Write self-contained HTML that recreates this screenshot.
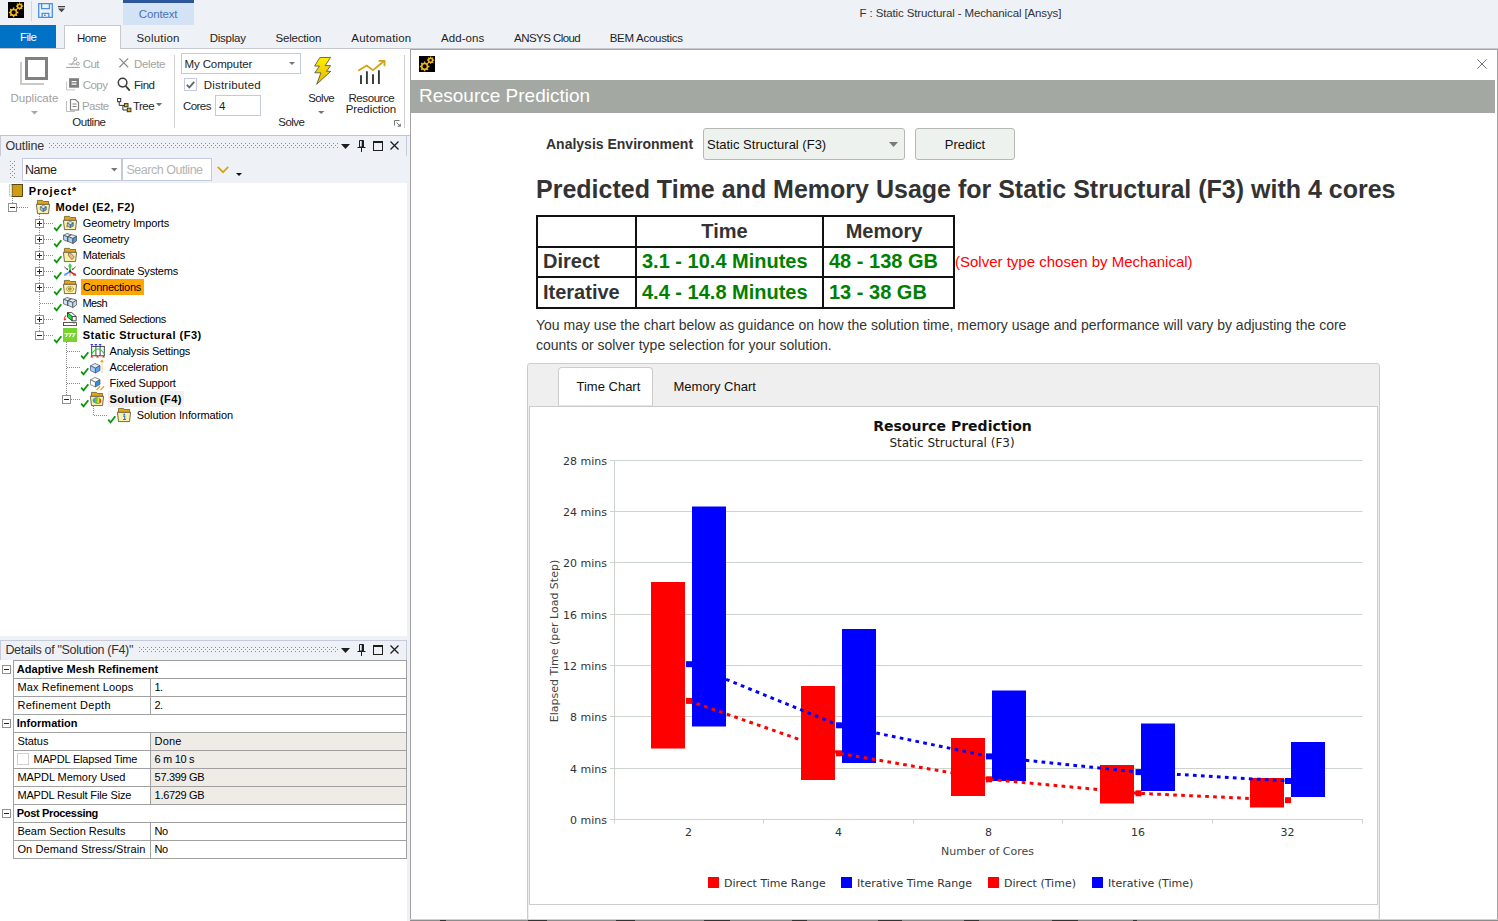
<!DOCTYPE html>
<html lang="en"><head><meta charset="utf-8"><title>F : Static Structural - Mechanical [Ansys]</title>
<style>
*{box-sizing:border-box;margin:0;padding:0}
html,body{width:1498px;height:921px;overflow:hidden;background:#eef2f7}
body{position:relative;font-family:"Liberation Sans",sans-serif;font-size:12px;color:#1e1e1e}
.a{position:absolute;white-space:nowrap}
.t{position:absolute;white-space:nowrap;line-height:16px;height:16px}
.ui{font-family:"Liberation Sans",sans-serif;font-size:12px}
.dv{font-family:"DejaVu Sans","Liberation Sans",sans-serif}
.c{text-align:center}
svg{position:absolute;overflow:visible}
</style></head>
<body>
<svg style="left:8px;top:2px" width="16" height="16" viewBox="0 0 16 16"><rect width="16" height="16" fill="#000"/>
<g fill="none" stroke="#f2b718" stroke-width="1.6"><circle cx="5.6" cy="10.4" r="2.9"/><circle cx="11.6" cy="4.2" r="2"/></g>
<g stroke="#f2b718" stroke-width="1.5" stroke-linecap="butt"><path d="M5.6 5.6v1.5M5.6 13.7v1.5M.8 10.4h1.5M8.9 10.4h1.5M2.2 7l1.1 1.1M7.9 12.7l1.1 1.1M2.2 13.8l1.1-1.1M7.9 8.1l1.1-1.1"/>
<path d="M11.6 .6v1.2M11.6 6.6v1.2M8 4.2h1.2M14 4.2h1.2M9 1.6l.9.9M13.3 5.9l.9.9M9 6.8l.9-.9M13.3 2.5l.9-.9" stroke-width="1.2"/></g></svg>
<div class="a" style="left:31px;top:1px;width:1px;height:20px;background:#d2d6de"></div>
<svg style="left:38px;top:3px" width="15" height="15" viewBox="0 0 15 15" fill="none" stroke="#4a8fe6" stroke-width="1.3"><path d="M.7 .7h13.6v13.6H.7z"/><path d="M3.6 .7v5h7.8v-5"/><path d="M4.2 14.3v-4h6.6v4" /><path d="M6 12.2h1.6" stroke-width="1.6"/></svg>
<svg style="left:58px;top:6px" width="8" height="7" viewBox="0 0 8 7"><rect x="0" y="0" width="7" height="1.3" fill="#444"/><path d="M0 2.6h7L3.5 6.2z" fill="#444"/></svg>
<div class="a" style="left:123px;top:0px;width:71px;height:25px;background:#d3e3f5"></div>
<div class="a" style="left:123px;top:0px;width:71px;height:3px;background:#2b579a"></div>
<div class="t" style="left:138.8px;top:6px;color:#4a72b5;font-size:11.5px;letter-spacing:-0.16px">Context</div>
<div class="t" style="left:859.6px;top:5px;font-size:11.5px;color:#333;letter-spacing:-0.13px">F : Static Structural - Mechanical [Ansys]</div>
<div class="a" style="left:0px;top:25px;width:56px;height:23px;background:#0072c6"></div>
<div class="t" style="left:19.96px;top:29px;color:#fff;font-size:11.5px;letter-spacing:-0.55px">File</div>
<div class="a" style="left:0px;top:48px;width:1498px;height:1px;background:#c6c9cf"></div>
<div class="a" style="left:64px;top:25px;width:57px;height:24px;background:#fff;border:1px solid #c6c9cf;border-bottom:none"></div>
<div class="t" style="left:77px;top:30px;font-size:11.5px;color:#1e1e1e;letter-spacing:-0.43px">Home</div>
<div class="t" style="left:136.5px;top:30px;font-size:11.5px;color:#1e1e1e;letter-spacing:0.19px">Solution</div>
<div class="t" style="left:209.7px;top:30px;font-size:11.5px;color:#1e1e1e;letter-spacing:-0.25px">Display</div>
<div class="t" style="left:275.6px;top:30px;font-size:11.5px;color:#1e1e1e;letter-spacing:-0.2px">Selection</div>
<div class="t" style="left:351.3px;top:30px;font-size:11.5px;color:#1e1e1e;letter-spacing:0.2px">Automation</div>
<div class="t" style="left:441px;top:30px;font-size:11.5px;color:#1e1e1e;letter-spacing:0.08px">Add-ons</div>
<div class="t" style="left:514.03px;top:30px;font-size:11.5px;color:#1e1e1e;letter-spacing:-0.55px">ANSYS Cloud</div>
<div class="t" style="left:609.7px;top:30px;font-size:11.5px;color:#1e1e1e;letter-spacing:-0.28px">BEM Acoustics</div>
<div class="a" style="left:0px;top:49px;width:1498px;height:86px;background:#fff"></div>
<div class="a" style="left:0px;top:135px;width:1498px;height:1px;background:#c2c5c8"></div>
<div class="a" style="left:20px;top:62px;width:24px;height:23px;border:2px solid #c9cbc9;border-top:none;border-right:none"></div>
<div class="a" style="left:25px;top:57px;width:23px;height:23px;border:3px solid #808080;background:#fff"></div>
<div class="t" style="left:10.6px;top:90px;color:#a0a0a0;font-size:11.5px;letter-spacing:-0.03px">Duplicate</div>
<svg style="left:30.5px;top:111px" width="7" height="3.5" viewBox="0 0 7 3.5"><path d="M0 0h7L3.5 3.5z" fill="#a8a8a8"/></svg>
<svg style="left:66px;top:56px" width="15" height="13" viewBox="0 0 15 13" fill="none" stroke="#a3a3a3" stroke-width="1"><path d="M.1 11.4h13.8"/><path d="M2.6 8h8.1M5.2 9.2L8.9 3.7"/><circle cx="9.3" cy="3" r="1.5"/><circle cx="11.8" cy="7.7" r="1.5"/></svg>
<div class="t" style="left:82.7px;top:56px;color:#a3a3a3;font-size:11.5px;letter-spacing:-0.55px">Cut</div>
<svg style="left:66px;top:77px" width="15" height="14" viewBox="0 0 15 14"><path d="M.6 4.5v8.4H9" fill="none" stroke="#c4c4c4"/><rect x="3.1" y="1.2" width="9.9" height="9.5" fill="#7f7f7f"/><path d="M5.6 4.6h4.9M5.6 7.1h4.9" stroke="#fff" stroke-width="1.2"/></svg>
<div class="t" style="left:82.7px;top:77px;color:#a3a3a3;font-size:11.5px;letter-spacing:-0.55px">Copy</div>
<svg style="left:66px;top:98px" width="15" height="15" viewBox="0 0 15 15" fill="none"><path d="M.5 3v10.5H9" stroke="#bdbdbd"/><path d="M4.5 1.5h5l3 3v7.5h-8z" stroke="#7f7f7f" stroke-width="1.2"/><path d="M6.5 6h4M6.5 8.5h4" stroke="#7f7f7f"/></svg>
<div class="t" style="left:81.99px;top:98px;color:#a3a3a3;font-size:11.5px;letter-spacing:-0.55px">Paste</div>
<svg style="left:119.2px;top:58.1px" width="9.6" height="9.6" viewBox="0 0 9.6 9.6"><path d="M.4 .4l8.8 8.8M9.2 .4L.4 9.2" stroke="#8c8c8c" stroke-width="1.25"/></svg>
<div class="t" style="left:134px;top:56px;color:#a3a3a3;font-size:11.5px;letter-spacing:-0.37px">Delete</div>
<svg style="left:117px;top:77px" width="14" height="15" viewBox="0 0 14 15" fill="none" stroke="#3b3b3b" stroke-width="1.5"><circle cx="5.6" cy="5.6" r="4.3"/><path d="M8.7 9l4 4.7" stroke-width="1.8"/></svg>
<div class="t" style="left:134px;top:77px;color:#1e1e1e;font-size:11.5px;letter-spacing:-0.46px">Find</div>
<svg style="left:117px;top:98px" width="15" height="14" viewBox="0 0 15 14" fill="none" stroke="#333" stroke-width="1"><rect x=".6" y=".5" width="3.1" height="3.2" fill="#fff"/><path d="M2.2 3.7V7.4H7.4M5.9 7.4V12H10.3"/><rect x="7.4" y="5.6" width="3.6" height="3.2" fill="#e8b414"/><rect x="10.3" y="10.2" width="3.6" height="3.5" fill="#e8b414"/></svg>
<div class="t" style="left:133.01px;top:98px;color:#1e1e1e;font-size:11.5px;letter-spacing:-0.55px">Tree</div>
<svg style="left:155.8px;top:103px" width="6.2" height="3.2" viewBox="0 0 6.2 3.2"><path d="M0 0h6.2L3.1 3.2z" fill="#707070"/></svg>
<div class="t" style="left:72.3px;top:114px;font-size:11.5px;color:#1e1e1e;letter-spacing:-0.46px">Outline</div>
<div class="a" style="left:174px;top:55px;width:1px;height:73px;background:#d0d0d0"></div>
<div class="a" style="left:181px;top:53px;width:120px;height:21px;border:1px solid #c3c9de;background:#fff"></div>
<div class="t" style="left:184.5px;top:56px;font-size:11.5px;letter-spacing:-0.12px">My Computer</div>
<svg style="left:289px;top:62px" width="6" height="3" viewBox="0 0 6 3"><path d="M0 0h6L3 3z" fill="#777"/></svg>
<div class="a" style="left:184px;top:78px;width:13px;height:13px;border:1px solid #c3c9de;background:#fff"></div>
<svg style="left:186px;top:81px" width="9" height="8" viewBox="0 0 9 8"><path d="M.8 3.8L3.4 6.4 8.2 .9" fill="none" stroke="#686868" stroke-width="1.8"/></svg>
<div class="t" style="left:203.8px;top:77px;font-size:11.5px;letter-spacing:0.19px">Distributed</div>
<div class="t" style="left:182.96px;top:98px;font-size:11.5px;letter-spacing:-0.55px">Cores</div>
<div class="a" style="left:215px;top:95px;width:46px;height:21px;border:1px solid #c3c9de;background:#fff"></div>
<div class="t" style="left:219px;top:98px;font-size:11.5px">4</div>
<div class="t" style="left:278.31px;top:114px;font-size:11.5px;letter-spacing:-0.55px">Solve</div>
<svg style="left:0;top:0" width="420" height="135" viewBox="0 0 420 135"><defs><linearGradient id="lg" x1="0" y1="0" x2="0" y2="1"><stop offset="0" stop-color="#fff200"/><stop offset="1" stop-color="#e6b000"/></linearGradient></defs><path d="M319.8 57.6L330.6 57.4 325.2 65.6 330.6 65.6 326.5 71.3 330.8 71.3 316.7 84.3 320.9 72.8 314.8 72.8 319.5 66.1 314.6 66.1z" fill="url(#lg)" stroke="#4a4a3a" stroke-width=".8" stroke-linejoin="miter"/></svg>
<div class="t" style="left:308.16px;top:90px;font-size:11.5px;letter-spacing:-0.55px">Solve</div>
<svg style="left:317.8px;top:111.3px" width="6.4" height="3" viewBox="0 0 6.4 3"><path d="M0 0h6.4L3.2 3z" fill="#777"/></svg>
<svg style="left:0;top:0" width="420" height="135" viewBox="0 0 420 135" fill="none"><path d="M361 75.2V83.9M366.9 71.3V83.9M373 74.3V83.9M378.9 70.2V83.9" stroke="#333a36" stroke-width="1.9"/><path d="M358.2 70.8L366.7 65.6 373 70.2 383.8 61.3" stroke="#d4a017" stroke-width="1.8"/><path d="M378.6 60.9h5.9v5.4" stroke="#d4a017" stroke-width="1.8"/></svg>
<div class="t" style="left:348.5px;top:90px;font-size:11.5px;letter-spacing:-0.43px">Resource</div>
<div class="t" style="left:345.7px;top:101px;font-size:11.5px;letter-spacing:-0.08px">Prediction</div>
<svg style="left:394px;top:120px" width="7" height="7" viewBox="0 0 7 7" fill="none" stroke="#777"><path d="M.5 5.5V.5H5.5"/><path d="M2.5 2.5l3.5 3.5" /><path d="M6.8 3.2v3.6H3.2z" fill="#777" stroke="none"/></svg>
<div class="a" style="left:404px;top:55px;width:1px;height:73px;background:#d0d0d0"></div>
<div class="a" style="left:0px;top:136px;width:407px;height:20px;background:#eef2f7;border-left:1px solid #c5cbdb;border-right:1px solid #c5cbdb"></div>
<div class="t" style="left:5.5px;top:138px;font-size:12.5px;color:#333;letter-spacing:-0.15px">Outline</div>
<svg style="left:49px;top:143px" width="289" height="5" viewBox="0 0 289 5" shape-rendering="crispEdges"><defs><pattern id="gp49_143" width="4" height="4" patternUnits="userSpaceOnUse"><rect width="1" height="1" fill="#8a8a8a"/><rect x="2" y="2" width="1" height="1" fill="#8a8a8a"/></pattern></defs><rect width="289" height="5" fill="url(#gp49_143)"/></svg>
<svg style="left:340.5px;top:144px" width="9" height="5" viewBox="0 0 9 5"><path d="M0 0h9L4.5 5z" fill="#1e1e1e"/></svg>
<svg style="left:357px;top:140px" width="9" height="12" viewBox="0 0 9 12" fill="none" stroke="#1e1e1e"><path d="M2.5 .5h4v6.5h-4z"/><path d="M5.5 .5v6.5" stroke-width="1.6"/><path d="M.5 7.5h8M4.5 7.5V12"/></svg>
<div class="a" style="left:373px;top:141px;width:10px;height:10px;border:1px solid #1e1e1e;border-top-width:2px"></div>
<svg style="left:390px;top:140.7px" width="9" height="9" viewBox="0 0 9 9"><path d="M.5 .5l8 8M8.5 .5l-8 8" stroke="#1e1e1e" stroke-width="1.3"/></svg>
<div class="a" style="left:0px;top:156px;width:407px;height:27px;background:#eef2f7"></div>
<svg style="left:10px;top:161px" width="5" height="17" viewBox="0 0 5 17" shape-rendering="crispEdges"><defs><pattern id="gv10_161" width="4" height="4" patternUnits="userSpaceOnUse"><rect width="1" height="1" fill="#8a8a8a"/><rect x="2" y="2" width="1" height="1" fill="#8a8a8a"/></pattern></defs><rect width="5" height="17" fill="url(#gv10_161)"/></svg>
<div class="a" style="left:22px;top:158px;width:100px;height:23px;border:1px solid #c3c9de;background:#fff"></div>
<div class="t" style="left:25px;top:162px;font-size:12.5px;letter-spacing:-0.45px">Name</div>
<svg style="left:110.5px;top:168px" width="6.5" height="3.5" viewBox="0 0 6.5 3.5"><path d="M0 0h6.5L3.25 3.5z" fill="#777"/></svg>
<div class="a" style="left:122px;top:158px;width:90px;height:23px;border:1px solid #c3c9de;background:#fff"></div>
<div class="t" style="left:126.5px;top:162px;font-size:12.5px;color:#b4b4b4;letter-spacing:-0.47px">Search Outline</div>
<svg style="left:217px;top:165.5px" width="12" height="8" viewBox="0 0 12 8"><path d="M.7 .8l5.3 5.4L11.3 .8" fill="none" stroke="#d9a514" stroke-width="1.7"/></svg>
<svg style="left:236px;top:173px" width="6" height="3" viewBox="0 0 6 3"><path d="M0 0h6L3 3z" fill="#111"/></svg>
<div class="a" style="left:0px;top:183px;width:407px;height:453px;background:#fff"></div>
<div class="a" style="left:407px;top:136px;width:3px;height:785px;background:#eef2f7"></div>
<div class="a" style="left:12px;top:198px;width:1px;height:5px;background-image:linear-gradient(180deg,#8a8a8a 1px,transparent 1px);background-size:1px 2px"></div>
<div class="a" style="left:39px;top:214px;width:1px;height:117px;background-image:linear-gradient(180deg,#8a8a8a 1px,transparent 1px);background-size:1px 2px"></div>
<div class="a" style="left:66px;top:342px;width:1px;height:53px;background-image:linear-gradient(180deg,#8a8a8a 1px,transparent 1px);background-size:1px 2px"></div>
<div class="a" style="left:93px;top:406px;width:1px;height:9px;background-image:linear-gradient(180deg,#8a8a8a 1px,transparent 1px);background-size:1px 2px"></div>
<svg style="left:9px;top:184px" width="14" height="13" viewBox="0 0 14 13"><rect x="3" y=".5" width="10.5" height="12" fill="#cf9d12" stroke="#4a3a08" stroke-width=".9"/><rect x=".5" y=".8" width="2.5" height="11.4" fill="#f2f2f2" stroke="#888" stroke-width=".6" stroke-dasharray="1 .6"/></svg>
<div class="t" style="left:28.8px;top:183px;font-size:11px;color:#000;font-weight:700;;letter-spacing:0.83px">Project*</div>
<div class="a" style="left:17px;top:207px;width:11px;height:1px;background-image:linear-gradient(90deg,#8a8a8a 1px,transparent 1px);background-size:2px 1px"></div>
<div class="a" style="left:8px;top:203px;width:9px;height:9px;border:1px solid #919191;background:#fff"></div><div class="a" style="left:10px;top:207px;width:5px;height:1px;background:#222"></div>
<svg style="left:36px;top:200px" width="14" height="14" viewBox="0 0 14 14"><path d="M1.4 .4h5.2l.9 1.1h5.1v3.5H1.4z" fill="#e0a616" stroke="#5a4c1c" stroke-width=".7"/><path d="M.4 4.3h13.2l-1.1 9.3H1.5z" fill="#fbf1a2" stroke="#4a463a" stroke-width=".8" stroke-linejoin="round"/><path d="M4.3 6.949999999999999L7.3 5.27L10.3 6.949999999999999L7.3 8.765z" fill="#dcecfb" stroke="#3d4c66" stroke-width=".6" stroke-linejoin="round"/><path d="M4.3 6.949999999999999L7.3 8.765V11.6L4.3 9.95z" fill="#a9cdf3" stroke="#3d4c66" stroke-width=".6" stroke-linejoin="round"/><path d="M10.3 6.949999999999999L7.3 8.765V11.6L10.3 9.95z" fill="#5f9fe6" stroke="#3d4c66" stroke-width=".6" stroke-linejoin="round"/></svg>
<div class="t" style="left:55.4px;top:199px;font-size:11px;color:#000;font-weight:700;;letter-spacing:0.35px">Model (E2, F2)</div>
<div class="a" style="left:44px;top:223px;width:9px;height:1px;background-image:linear-gradient(90deg,#8a8a8a 1px,transparent 1px);background-size:2px 1px"></div>
<div class="a" style="left:35px;top:219px;width:9px;height:9px;border:1px solid #919191;background:#fff"></div><div class="a" style="left:37px;top:223px;width:5px;height:1px;background:#222"></div><div class="a" style="left:39px;top:221px;width:1px;height:5px;background:#222"></div>
<svg style="left:53px;top:221px" width="11" height="10" viewBox="0 0 11 10"><path d="M1.2 6.6L3.6 9.3 8.3 3.3" fill="none" stroke="#0a960a" stroke-width="1.8"/></svg>
<svg style="left:63.3px;top:216px" width="14" height="14" viewBox="0 0 14 14"><path d="M1.4 .4h5.2l.9 1.1h5.1v3.5H1.4z" fill="#e0a616" stroke="#5a4c1c" stroke-width=".7"/><path d="M.4 4.3h13.2l-1.1 9.3H1.5z" fill="#fbf1a2" stroke="#4a463a" stroke-width=".8" stroke-linejoin="round"/><path d="M4.3 6.949999999999999L7.3 5.27L10.3 6.949999999999999L7.3 8.765z" fill="#dcecfb" stroke="#3d4c66" stroke-width=".6" stroke-linejoin="round"/><path d="M4.3 6.949999999999999L7.3 8.765V11.6L4.3 9.95z" fill="#a9cdf3" stroke="#3d4c66" stroke-width=".6" stroke-linejoin="round"/><path d="M10.3 6.949999999999999L7.3 8.765V11.6L10.3 9.95z" fill="#5f9fe6" stroke="#3d4c66" stroke-width=".6" stroke-linejoin="round"/><path d="M3 10.2h2.4M4.2 9v2.4" stroke="#c98a00" stroke-width=".9"/></svg>
<div class="t" style="left:82.7px;top:215px;font-size:11px;color:#000;;letter-spacing:-0.1px">Geometry Imports</div>
<div class="a" style="left:44px;top:239px;width:9px;height:1px;background-image:linear-gradient(90deg,#8a8a8a 1px,transparent 1px);background-size:2px 1px"></div>
<div class="a" style="left:35px;top:235px;width:9px;height:9px;border:1px solid #919191;background:#fff"></div><div class="a" style="left:37px;top:239px;width:5px;height:1px;background:#222"></div><div class="a" style="left:39px;top:237px;width:1px;height:5px;background:#222"></div>
<svg style="left:53px;top:237px" width="11" height="10" viewBox="0 0 11 10"><path d="M1.2 6.6L3.6 9.3 8.3 3.3" fill="none" stroke="#0a960a" stroke-width="1.8"/></svg>
<svg style="left:63.3px;top:233px" width="14" height="11" viewBox="0 0 14 11" stroke="#444" stroke-width=".7" stroke-linejoin="round"><path d="M.5 2.3L4 .5l4.2 1.3-3.5 2z" fill="#dcecfb"/><path d="M.5 2.3l4.2 1.5v4.7L.5 6.8z" fill="#b3d3f5"/><path d="M8.2 1.8L4.7 3.8v4.7l3.5-2.2z" fill="#9cc6f2"/><path d="M5 3.6L8.8 1.7l4.7 1.5-3.7 2.3z" fill="#dcecfb"/><path d="M5 3.6l4.8 1.9v5L5 8.4z" fill="#b3d3f5"/><path d="M13.5 3.2L9.8 5.5v5l3.7-2.5z" fill="#4f96e6"/></svg>
<div class="t" style="left:82.7px;top:231px;font-size:11px;color:#000;;letter-spacing:-0.26px">Geometry</div>
<div class="a" style="left:44px;top:255px;width:9px;height:1px;background-image:linear-gradient(90deg,#8a8a8a 1px,transparent 1px);background-size:2px 1px"></div>
<div class="a" style="left:35px;top:251px;width:9px;height:9px;border:1px solid #919191;background:#fff"></div><div class="a" style="left:37px;top:255px;width:5px;height:1px;background:#222"></div><div class="a" style="left:39px;top:253px;width:1px;height:5px;background:#222"></div>
<svg style="left:53px;top:253px" width="11" height="10" viewBox="0 0 11 10"><path d="M1.2 6.6L3.6 9.3 8.3 3.3" fill="none" stroke="#0a960a" stroke-width="1.8"/></svg>
<svg style="left:63.3px;top:248px" width="14" height="14" viewBox="0 0 14 14"><path d="M1.4 .4h5.2l.9 1.1h5.1v3.5H1.4z" fill="#e0a616" stroke="#5a4c1c" stroke-width=".7"/><path d="M.4 4.3h13.2l-1.1 9.3H1.5z" fill="#fbf1a2" stroke="#4a463a" stroke-width=".8" stroke-linejoin="round"/><path d="M5.3 5.3l1.5-.5 1 1 .4-.2 3 3.3-2.2 2.7L5.7 8z" fill="#f3b58e" stroke="#5a4c3c" stroke-width=".6" stroke-linejoin="round"/></svg>
<div class="t" style="left:82.7px;top:247px;font-size:11px;color:#000;;letter-spacing:-0.25px">Materials</div>
<div class="a" style="left:44px;top:271px;width:9px;height:1px;background-image:linear-gradient(90deg,#8a8a8a 1px,transparent 1px);background-size:2px 1px"></div>
<div class="a" style="left:35px;top:267px;width:9px;height:9px;border:1px solid #919191;background:#fff"></div><div class="a" style="left:37px;top:271px;width:5px;height:1px;background:#222"></div><div class="a" style="left:39px;top:269px;width:1px;height:5px;background:#222"></div>
<svg style="left:53px;top:269px" width="11" height="10" viewBox="0 0 11 10"><path d="M1.2 6.6L3.6 9.3 8.3 3.3" fill="none" stroke="#0a960a" stroke-width="1.8"/></svg>
<svg style="left:63.3px;top:263px" width="14" height="15" viewBox="0 0 14 15" fill="none"><path d="M7 8.3V3" stroke="#19c219" stroke-width="1.5"/><path d="M4.9 3.6L7 .3l2.1 3.3z" fill="#19e019"/><path d="M7 8.3L2.8 11.3" stroke="#4a8cf0" stroke-width="1.5"/><path d="M.6 12.9l1.3-3.2 2.6 2.5z" fill="#6aa8ff"/><path d="M7 8.3l4.2 3" stroke="#e01818" stroke-width="1.5"/><path d="M13.4 12.9l-1.3-3.2-2.6 2.5z" fill="#ff2020"/><path d="M1.3 3.8l3.4 3M12.7 3.8l-3.4 3" stroke="#555" stroke-width="1"/><path d="M3.2 6.8h1.7V5.1zM10.8 6.8H9.1V5.1z" fill="#444"/><path d="M7 9.5v4" stroke="#777" stroke-width="1.3" stroke-dasharray="1.2 .7"/><rect x="6.1" y="7.4" width="1.8" height="1.8" fill="#222"/></svg>
<div class="t" style="left:82.7px;top:263px;font-size:11px;color:#000;;letter-spacing:-0.21px">Coordinate Systems</div>
<div class="a" style="left:44px;top:287px;width:9px;height:1px;background-image:linear-gradient(90deg,#8a8a8a 1px,transparent 1px);background-size:2px 1px"></div>
<div class="a" style="left:35px;top:283px;width:9px;height:9px;border:1px solid #919191;background:#fff"></div><div class="a" style="left:37px;top:287px;width:5px;height:1px;background:#222"></div><div class="a" style="left:39px;top:285px;width:1px;height:5px;background:#222"></div>
<svg style="left:53px;top:285px" width="11" height="10" viewBox="0 0 11 10"><path d="M1.2 6.6L3.6 9.3 8.3 3.3" fill="none" stroke="#0a960a" stroke-width="1.8"/></svg>
<svg style="left:63.3px;top:280px" width="14" height="14" viewBox="0 0 14 14"><path d="M1.4 .4h5.2l.9 1.1h5.1v3.5H1.4z" fill="#e0a616" stroke="#5a4c1c" stroke-width=".7"/><path d="M.4 4.3h13.2l-1.1 9.3H1.5z" fill="#fbf1a2" stroke="#4a463a" stroke-width=".8" stroke-linejoin="round"/><ellipse cx="7" cy="9" rx="3.6" ry="2.6" fill="#efe08a" stroke="#6b5f3a" stroke-width=".7" stroke-dasharray="1.2 .8"/><ellipse cx="6.8" cy="8.9" rx="1.5" ry="1.1" fill="#e0a616" stroke="#7a5a10" stroke-width=".5"/></svg>
<div class="a" style="left:81px;top:279px;width:63px;height:16px;background:#ffa500"></div>
<div class="t" style="left:82.7px;top:279px;font-size:11px;color:#000;;letter-spacing:-0.26px">Connections</div>
<div class="a" style="left:40px;top:303px;width:13px;height:1px;background-image:linear-gradient(90deg,#8a8a8a 1px,transparent 1px);background-size:2px 1px"></div>
<svg style="left:53px;top:301px" width="11" height="10" viewBox="0 0 11 10"><path d="M1.2 6.6L3.6 9.3 8.3 3.3" fill="none" stroke="#0a960a" stroke-width="1.8"/></svg>
<svg style="left:63.3px;top:297px" width="14" height="11" viewBox="0 0 14 11" stroke="#444" stroke-width=".7" stroke-linejoin="round"><path d="M.5 2.3L4 .5l4.2 1.3-3.5 2z" fill="#dcecfb"/><path d="M.5 2.3l4.2 1.5v4.7L.5 6.8z" fill="#cfe2f7"/><path d="M8.2 1.8L4.7 3.8v4.7l3.5-2.2z" fill="#d4e5f8"/><path d="M5 3.6L8.8 1.7l4.7 1.5-3.7 2.3z" fill="#dcecfb"/><path d="M5 3.6l4.8 1.9v5L5 8.4z" fill="#cfe2f7"/><path d="M13.5 3.2L9.8 5.5v5l3.7-2.5z" fill="#c3daf3"/></svg>
<div class="t" style="left:82.42px;top:295px;font-size:11px;color:#000;;letter-spacing:-0.55px">Mesh</div>
<div class="a" style="left:44px;top:319px;width:9px;height:1px;background-image:linear-gradient(90deg,#8a8a8a 1px,transparent 1px);background-size:2px 1px"></div>
<div class="a" style="left:35px;top:315px;width:9px;height:9px;border:1px solid #919191;background:#fff"></div><div class="a" style="left:37px;top:319px;width:5px;height:1px;background:#222"></div><div class="a" style="left:39px;top:317px;width:1px;height:5px;background:#222"></div>
<svg style="left:63.3px;top:312px" width="14" height="14" viewBox="0 0 14 14"><path d="M4.5 .6h4.3l4.4 3.9v4.3h-4z" fill="#fff" stroke="#222" stroke-width=".8" stroke-linejoin="round"/><path d="M4.5 .6v4.5l4.7 3.7V4.5z" fill="#22e03a" stroke="#222" stroke-width=".8" stroke-linejoin="round"/><path d="M9.2 4.5h4" stroke="#222" stroke-width=".8"/><rect x=".5" y="10.6" width="13" height="3" fill="#fff" stroke="#333" stroke-width=".8"/><rect x="10.3" y="11.1" width="1.6" height=".9" fill="#e8a818"/><path d="M3 3.3q-1.8 1.6-1.3 4.2" fill="none" stroke="#ff2020" stroke-width="1.1"/><path d="M.3 6.7h3.2l-1.6 2z" fill="#ff2020"/></svg>
<div class="t" style="left:82.7px;top:311px;font-size:11px;color:#000;;letter-spacing:-0.38px">Named Selections</div>
<div class="a" style="left:44px;top:335px;width:9px;height:1px;background-image:linear-gradient(90deg,#8a8a8a 1px,transparent 1px);background-size:2px 1px"></div>
<div class="a" style="left:35px;top:331px;width:9px;height:9px;border:1px solid #919191;background:#fff"></div><div class="a" style="left:37px;top:335px;width:5px;height:1px;background:#222"></div>
<svg style="left:53px;top:333px" width="11" height="10" viewBox="0 0 11 10"><path d="M1.2 6.6L3.6 9.3 8.3 3.3" fill="none" stroke="#0a960a" stroke-width="1.8"/></svg>
<svg style="left:63px;top:328px" width="14" height="14" viewBox="0 0 14 14"><rect width="14" height="14" fill="#77d42e"/><path d="M1.5 5.6h11" stroke="#fff" stroke-width="1.1"/><path d="M4.3 5.8q-.3 2-1.7 3.2M7.8 5.8q-.3 2-1.7 3.2M11.3 5.8q-.3 2-1.7 3.2" stroke="#fff" stroke-width="1.1" fill="none"/></svg>
<div class="t" style="left:82.7px;top:327px;font-size:11px;color:#000;font-weight:700;;letter-spacing:0.49px">Static Structural (F3)</div>
<div class="a" style="left:67px;top:351px;width:13px;height:1px;background-image:linear-gradient(90deg,#8a8a8a 1px,transparent 1px);background-size:2px 1px"></div>
<svg style="left:80px;top:349px" width="11" height="10" viewBox="0 0 11 10"><path d="M1.2 6.6L3.6 9.3 8.3 3.3" fill="none" stroke="#0a960a" stroke-width="1.8"/></svg>
<svg style="left:90.3px;top:344px" width="16" height="15" viewBox="0 0 16 15" fill="none"><rect x="1.7" y="2.4" width="12.6" height="9.4" stroke="#333" stroke-width=".9"/><path d="M5.9 2.4v9.4M10.1 2.4v9.4" stroke="#333" stroke-width=".9"/><path d="M.6 .5h2.4M4.7 .5h2.4M8.9 .5h2.4M1.8 .5v2M5.9 .5v2M10.1 .5v2" stroke="#1c2cf0" stroke-width=".9"/><path d="M1.8 9.8q6.2-9.5 12.4 0" stroke="#16e016" stroke-width="1.1"/><path d="M.3 13.5l1.5-2 1.5 2zM6 13.5l1.5-2 1.5 2zM12 13.5l1.5-2 1.5 2z" fill="#ff1a1a"/></svg>
<div class="t" style="left:109.6px;top:343px;font-size:11px;color:#000;;letter-spacing:-0.19px">Analysis Settings</div>
<div class="a" style="left:67px;top:367px;width:13px;height:1px;background-image:linear-gradient(90deg,#8a8a8a 1px,transparent 1px);background-size:2px 1px"></div>
<svg style="left:80px;top:365px" width="11" height="10" viewBox="0 0 11 10"><path d="M1.2 6.6L3.6 9.3 8.3 3.3" fill="none" stroke="#0a960a" stroke-width="1.8"/></svg>
<svg style="left:90.3px;top:362.5px" width="10.5" height="10.5" viewBox="0 0 11 11"><path d="M.5 3L5.2 .5l5.3 2.3-4.8 2.6z" fill="#dcecfb" stroke="#3d4c66" stroke-width=".7" stroke-linejoin="round"/><path d="M.5 3l5.2 2.4v5.1L.5 8z" fill="#a9cdf3" stroke="#3d4c66" stroke-width=".7" stroke-linejoin="round"/><path d="M10.5 2.8L5.7 5.4v5.1l4.8-2.7z" fill="#5f9fe6" stroke="#3d4c66" stroke-width=".7" stroke-linejoin="round"/></svg><svg style="left:99.8px;top:359px" width="4" height="14" viewBox="0 0 4 14"><path d="M2 3.5V14" stroke="#e8a820" stroke-width="1" stroke-dasharray="1 1"/><path d="M0 3.3L2 .2l2 3.1z" fill="#e8a820"/></svg>
<div class="t" style="left:109.6px;top:359px;font-size:11px;color:#000;;letter-spacing:-0.18px">Acceleration</div>
<div class="a" style="left:67px;top:383px;width:13px;height:1px;background-image:linear-gradient(90deg,#8a8a8a 1px,transparent 1px);background-size:2px 1px"></div>
<svg style="left:80px;top:381px" width="11" height="10" viewBox="0 0 11 10"><path d="M1.2 6.6L3.6 9.3 8.3 3.3" fill="none" stroke="#0a960a" stroke-width="1.8"/></svg>
<svg style="left:90.3px;top:376.5px" width="10.5" height="10.5" viewBox="0 0 11 11"><path d="M.5 3L5.2 .5l5.3 2.3-4.8 2.6z" fill="#fff" stroke="#555" stroke-width=".7" stroke-linejoin="round"/><path d="M.5 3l5.2 2.4v5.1L.5 8z" fill="#fff" stroke="#555" stroke-width=".7" stroke-linejoin="round"/><path d="M10.5 2.8L5.7 5.4v5.1l4.8-2.7z" fill="#2f8fe8" stroke="#555" stroke-width=".7" stroke-linejoin="round"/></svg><svg style="left:95.8px;top:386px" width="9" height="4" viewBox="0 0 9 4"><path d="M.5 4L4 .3M4.5 4L8 .3" stroke="#e8a820" stroke-width="1.3"/></svg>
<div class="t" style="left:109.6px;top:375px;font-size:11px;color:#000;;letter-spacing:-0.18px">Fixed Support</div>
<div class="a" style="left:71px;top:399px;width:9px;height:1px;background-image:linear-gradient(90deg,#8a8a8a 1px,transparent 1px);background-size:2px 1px"></div>
<div class="a" style="left:62px;top:395px;width:9px;height:9px;border:1px solid #919191;background:#fff"></div><div class="a" style="left:64px;top:399px;width:5px;height:1px;background:#222"></div>
<svg style="left:80px;top:397px" width="11" height="10" viewBox="0 0 11 10"><path d="M1.2 6.6L3.6 9.3 8.3 3.3" fill="none" stroke="#0a960a" stroke-width="1.8"/></svg>
<svg style="left:90.3px;top:392px" width="14" height="14" viewBox="0 0 14 14"><path d="M1.4 .4h5.2l.9 1.1h5.1v3.5H1.4z" fill="#e0a616" stroke="#5a4c1c" stroke-width=".7"/><path d="M.4 4.3h13.2l-1.1 9.3H1.5z" fill="#fbf1a2" stroke="#4a463a" stroke-width=".8" stroke-linejoin="round"/><path d="M3 7.5q1-2 4-2t4 2.5v2q-1 2-4 1.5t-4-2z" fill="#3aa0e0" stroke="#555" stroke-width=".4"/><path d="M5 5.8q1.5-.5 2.5-.2v5.6q-1.5 0-2.5-.8z" fill="#5cc83c"/><path d="M7.5 5.6q1.5.1 2.3.8v4.4q-.8.6-2.3.4z" fill="#f0e030"/><path d="M9.3 6.2q1.3.6 1.7 1.8v2q-.5 1-1.7 1.2z" fill="#e8402a"/></svg>
<div class="a" style="left:108px;top:391px;width:76px;height:16px;background:#f0f0f0"></div>
<div class="t" style="left:109.6px;top:391px;font-size:11px;color:#000;font-weight:700;;letter-spacing:0.38px">Solution (F4)</div>
<div class="a" style="left:94px;top:415px;width:13px;height:1px;background-image:linear-gradient(90deg,#8a8a8a 1px,transparent 1px);background-size:2px 1px"></div>
<svg style="left:107px;top:413px" width="11" height="10" viewBox="0 0 11 10"><path d="M1.2 6.6L3.6 9.3 8.3 3.3" fill="none" stroke="#0a960a" stroke-width="1.8"/></svg>
<svg style="left:117.3px;top:408px" width="14" height="14" viewBox="0 0 14 14"><path d="M1.4 .4h5.2l.9 1.1h5.1v3.5H1.4z" fill="#e0a616" stroke="#5a4c1c" stroke-width=".7"/><path d="M.4 4.3h13.2l-1.1 9.3H1.5z" fill="#fbf1a2" stroke="#4a463a" stroke-width=".8" stroke-linejoin="round"/><circle cx="7.2" cy="6.3" r=".9" fill="#2f6fe0"/><path d="M6.2 8.1h1.5v3.3M6 11.5h3" fill="none" stroke="#2f6fe0" stroke-width="1.1"/></svg>
<div class="t" style="left:136.8px;top:407px;font-size:11px;color:#000;;letter-spacing:-0.08px">Solution Information</div>
<div class="a" style="left:0px;top:636px;width:407px;height:4px;background:#eef2f7"></div>
<div class="a" style="left:0px;top:640px;width:407px;height:20px;background:#eef2f7;border:1px solid #c5cbdb;border-bottom:none"></div>
<div class="t" style="left:5.4px;top:642px;font-size:12.5px;color:#333;letter-spacing:-0.32px">Details of "Solution (F4)"</div>
<svg style="left:139px;top:647px" width="199" height="5" viewBox="0 0 199 5" shape-rendering="crispEdges"><defs><pattern id="gp139_647" width="4" height="4" patternUnits="userSpaceOnUse"><rect width="1" height="1" fill="#8a8a8a"/><rect x="2" y="2" width="1" height="1" fill="#8a8a8a"/></pattern></defs><rect width="199" height="5" fill="url(#gp139_647)"/></svg>
<svg style="left:340.5px;top:648px" width="9" height="5" viewBox="0 0 9 5"><path d="M0 0h9L4.5 5z" fill="#1e1e1e"/></svg>
<svg style="left:357px;top:644px" width="9" height="12" viewBox="0 0 9 12" fill="none" stroke="#1e1e1e"><path d="M2.5 .5h4v6.5h-4z"/><path d="M5.5 .5v6.5" stroke-width="1.6"/><path d="M.5 7.5h8M4.5 7.5V12"/></svg>
<div class="a" style="left:373px;top:645px;width:10px;height:10px;border:1px solid #1e1e1e;border-top-width:2px"></div>
<svg style="left:390px;top:644.7px" width="9" height="9" viewBox="0 0 9 9"><path d="M.5 .5l8 8M8.5 .5l-8 8" stroke="#1e1e1e" stroke-width="1.3"/></svg>
<div class="a" style="left:0px;top:660px;width:407px;height:261px;background:#fff"></div>
<div class="a" style="left:13px;top:660px;width:394px;height:199px;border:1px solid #a0a0a0"></div>
<div class="a" style="left:2px;top:665px;width:9px;height:9px;border:1px solid #919191;background:#fff"></div>
<div class="a" style="left:4px;top:669px;width:5px;height:1px;background:#222"></div>
<div class="t" style="left:16.8px;top:660.5px;font-size:11px;font-weight:700;color:#000;letter-spacing:0.03px">Adaptive Mesh Refinement</div>
<div class="a" style="left:13px;top:678px;width:394px;height:1px;background:#a0a0a0"></div>
<div class="a" style="left:150px;top:678px;width:1px;height:18px;background:#a0a0a0"></div>
<div class="t" style="left:17.4px;top:678.5px;font-size:11px;color:#000;;letter-spacing:0.15px">Max Refinement Loops</div>
<div class="t" style="left:154.38px;top:678.5px;font-size:11px;color:#000;;letter-spacing:-0.55px">1.</div>
<div class="a" style="left:13px;top:696px;width:394px;height:1px;background:#a0a0a0"></div>
<div class="a" style="left:150px;top:696px;width:1px;height:18px;background:#a0a0a0"></div>
<div class="t" style="left:17.4px;top:696.5px;font-size:11px;color:#000;;letter-spacing:0.3px">Refinement Depth</div>
<div class="t" style="left:154.38px;top:696.5px;font-size:11px;color:#000;;letter-spacing:-0.55px">2.</div>
<div class="a" style="left:13px;top:714px;width:394px;height:1px;background:#a0a0a0"></div>
<div class="a" style="left:2px;top:719px;width:9px;height:9px;border:1px solid #919191;background:#fff"></div>
<div class="a" style="left:4px;top:723px;width:5px;height:1px;background:#222"></div>
<div class="t" style="left:16.8px;top:714.5px;font-size:11px;font-weight:700;color:#000;letter-spacing:0.02px">Information</div>
<div class="a" style="left:13px;top:732px;width:394px;height:1px;background:#a0a0a0"></div>
<div class="a" style="left:151px;top:733px;width:255px;height:17px;background:#efece8"></div>
<div class="a" style="left:150px;top:732px;width:1px;height:18px;background:#a0a0a0"></div>
<div class="t" style="left:17.4px;top:732.5px;font-size:11px;color:#000;;letter-spacing:-0.04px">Status</div>
<div class="t" style="left:154.6px;top:732.5px;font-size:11px;color:#000;;letter-spacing:0.2px">Done</div>
<div class="a" style="left:13px;top:750px;width:394px;height:1px;background:#a0a0a0"></div>
<div class="a" style="left:151px;top:751px;width:255px;height:17px;background:#efece8"></div>
<div class="a" style="left:150px;top:750px;width:1px;height:18px;background:#a0a0a0"></div>
<div class="a" style="left:17px;top:753px;width:12px;height:12px;border:1px solid #d0d0d0;background:#fff"></div>
<div class="t" style="left:33.5px;top:750.5px;font-size:11px;color:#000;;letter-spacing:-0.19px">MAPDL Elapsed Time</div>
<div class="t" style="left:154.6px;top:750.5px;font-size:11px;color:#000;;letter-spacing:-0.34px">6 m 10 s</div>
<div class="a" style="left:13px;top:768px;width:394px;height:1px;background:#a0a0a0"></div>
<div class="a" style="left:151px;top:769px;width:255px;height:17px;background:#efece8"></div>
<div class="a" style="left:150px;top:768px;width:1px;height:18px;background:#a0a0a0"></div>
<div class="t" style="left:17.4px;top:768.5px;font-size:11px;color:#000;;letter-spacing:-0.06px">MAPDL Memory Used</div>
<div class="t" style="left:154.6px;top:768.5px;font-size:11px;color:#000;;letter-spacing:-0.32px">57.399 GB</div>
<div class="a" style="left:13px;top:786px;width:394px;height:1px;background:#a0a0a0"></div>
<div class="a" style="left:151px;top:787px;width:255px;height:17px;background:#efece8"></div>
<div class="a" style="left:150px;top:786px;width:1px;height:18px;background:#a0a0a0"></div>
<div class="t" style="left:17.4px;top:786.5px;font-size:11px;color:#000;;letter-spacing:-0.14px">MAPDL Result File Size</div>
<div class="t" style="left:154.6px;top:786.5px;font-size:11px;color:#000;;letter-spacing:-0.32px">1.6729 GB</div>
<div class="a" style="left:13px;top:804px;width:394px;height:1px;background:#a0a0a0"></div>
<div class="a" style="left:2px;top:809px;width:9px;height:9px;border:1px solid #919191;background:#fff"></div>
<div class="a" style="left:4px;top:813px;width:5px;height:1px;background:#222"></div>
<div class="t" style="left:16.8px;top:804.5px;font-size:11px;font-weight:700;color:#000;letter-spacing:-0.34px">Post Processing</div>
<div class="a" style="left:13px;top:822px;width:394px;height:1px;background:#a0a0a0"></div>
<div class="a" style="left:150px;top:822px;width:1px;height:18px;background:#a0a0a0"></div>
<div class="t" style="left:17.4px;top:822.5px;font-size:11px;color:#000;;letter-spacing:-0.01px">Beam Section Results</div>
<div class="t" style="left:154.6px;top:822.5px;font-size:11px;color:#000;;letter-spacing:-0.46px">No</div>
<div class="a" style="left:13px;top:840px;width:394px;height:1px;background:#a0a0a0"></div>
<div class="a" style="left:150px;top:840px;width:1px;height:18px;background:#a0a0a0"></div>
<div class="t" style="left:17.4px;top:840.5px;font-size:11px;color:#000;;letter-spacing:0.12px">On Demand Stress/Strain</div>
<div class="t" style="left:154.6px;top:840.5px;font-size:11px;color:#000;;letter-spacing:-0.46px">No</div>
<div class="a" style="left:410px;top:49px;width:1088px;height:872px;background:#fff;border:1px solid #a3a3a3;border-bottom:none"></div>
<svg style="left:419px;top:56px" width="16" height="16" viewBox="0 0 16 16"><rect width="16" height="16" fill="#000"/>
<g fill="none" stroke="#f2b718" stroke-width="1.6"><circle cx="5.6" cy="10.4" r="2.9"/><circle cx="11.6" cy="4.2" r="2"/></g>
<g stroke="#f2b718" stroke-width="1.5" stroke-linecap="butt"><path d="M5.6 5.6v1.5M5.6 13.7v1.5M.8 10.4h1.5M8.9 10.4h1.5M2.2 7l1.1 1.1M7.9 12.7l1.1 1.1M2.2 13.8l1.1-1.1M7.9 8.1l1.1-1.1"/>
<path d="M11.6 .6v1.2M11.6 6.6v1.2M8 4.2h1.2M14 4.2h1.2M9 1.6l.9.9M13.3 5.9l.9.9M9 6.8l.9-.9M13.3 2.5l.9-.9" stroke-width="1.2"/></g></svg>
<svg style="left:1477px;top:59px" width="10" height="10" viewBox="0 0 10 10"><path d="M.4 .4l9.2 9.2M9.6 .4L.4 9.6" stroke="#727272" stroke-width="1"/></svg>
<div class="a" style="left:411px;top:80px;width:1084px;height:33px;background:#a3a8a3"></div>
<div class="t" style="left:419px;top:85px;font-size:19px;color:#fff;line-height:22px;height:22px">Resource Prediction</div>
<div class="t" style="left:546px;top:136px;font-size:14px;font-weight:700;color:#333">Analysis Environment</div>
<div class="a" style="left:703px;top:128px;width:202px;height:32px;border:1px solid #b5b8b5;border-radius:3px;background:#eef2ee"></div>
<div class="t" style="left:707px;top:136.5px;font-size:13px;color:#111">Static Structural (F3)</div>
<svg style="left:889px;top:141.5px" width="9" height="5" viewBox="0 0 9 5"><path d="M0 0h9L4.5 5z" fill="#7a7a7a"/></svg>
<div class="a" style="left:915px;top:128px;width:100px;height:32px;border:1px solid #b5b8b5;border-radius:3px;background:#eef2ee"></div>
<div class="t c" style="left:915px;top:136.5px;width:100px;font-size:13px;color:#111">Predict</div>
<div class="t" style="left:536px;top:174px;font-size:25px;font-weight:700;color:#333;line-height:30px;height:30px">Predicted Time and Memory Usage for Static Structural (F3) with 4 cores</div>
<div class="a" style="left:536px;top:215px;width:419px;height:94px;border:2px solid #111"></div>
<div class="a" style="left:635px;top:215px;width:2px;height:94px;background:#111"></div>
<div class="a" style="left:822px;top:215px;width:2px;height:94px;background:#111"></div>
<div class="a" style="left:536px;top:246px;width:419px;height:2px;background:#111"></div>
<div class="a" style="left:536px;top:276px;width:419px;height:2px;background:#111"></div>
<div class="t c" style="left:644.5px;top:219px;width:160px;font-size:20px;font-weight:700;color:#333;line-height:24px;height:24px;">Time</div>
<div class="t c" style="left:824px;top:219px;width:120px;font-size:20px;font-weight:700;color:#333;line-height:24px;height:24px;">Memory</div>
<div class="t" style="left:543px;top:249px;font-size:20px;font-weight:700;color:#333;line-height:24px;height:24px;">Direct</div>
<div class="t" style="left:642px;top:249px;font-size:20px;font-weight:700;color:#008000;line-height:24px;height:24px;">3.1 - 10.4 Minutes</div>
<div class="t" style="left:829px;top:249px;font-size:20px;font-weight:700;color:#008000;line-height:24px;height:24px;">48 - 138 GB</div>
<div class="t" style="left:543px;top:279.6px;font-size:20px;font-weight:700;color:#333;line-height:24px;height:24px;">Iterative</div>
<div class="t" style="left:642px;top:279.6px;font-size:20px;font-weight:700;color:#008000;line-height:24px;height:24px;">4.4 - 14.8 Minutes</div>
<div class="t" style="left:829px;top:279.6px;font-size:20px;font-weight:700;color:#008000;line-height:24px;height:24px;">13 - 38 GB</div>
<div class="t" style="left:955px;top:253px;font-size:15px;color:#f00;line-height:18px;height:18px">(Solver type chosen by Mechanical)</div>
<div class="t" style="left:536px;top:316px;font-size:14px;color:#333;line-height:18px;height:18px">You may use the chart below as guidance on how the solution time, memory usage and performance will vary by adjusting the core</div>
<div class="t" style="left:536px;top:336px;font-size:14px;color:#333;line-height:18px;height:18px">counts or solver type selection for your solution.</div>
<div class="a" style="left:527px;top:363px;width:853px;height:560px;background:#efefef;border:1px solid #ccc;border-radius:3px 3px 0 0"></div>
<div class="a" style="left:558px;top:367px;width:95px;height:39px;background:#fff;border:1px solid #ccc;border-bottom-color:#e4e4e4;border-radius:4px 4px 0 0"></div>
<div class="a" style="left:529px;top:406px;width:849px;height:499px;background:#fff;border:1px solid #ccc"></div>
<div class="t" style="left:576.5px;top:379px;font-size:13px;color:#111">Time Chart</div>
<div class="t" style="left:673.5px;top:379px;font-size:13px;color:#111">Memory Chart</div>
<div class="a" style="left:529px;top:905px;width:849px;height:14px;background:#fff"></div>
<svg style="left:0;top:0" width="1498" height="921" viewBox="0 0 1498 921" font-family="DejaVu Sans, Liberation Sans, sans-serif">
<path d="M610 460.5H1362.5" stroke="#cdd3cd" stroke-width="1"/>
<text x="607" y="465" text-anchor="end" font-size="11" fill="#333">28 mins</text>
<path d="M610 511.5H1362.5" stroke="#cdd3cd" stroke-width="1"/>
<text x="607" y="516" text-anchor="end" font-size="11" fill="#333">24 mins</text>
<path d="M610 562.5H1362.5" stroke="#cdd3cd" stroke-width="1"/>
<text x="607" y="567" text-anchor="end" font-size="11" fill="#333">20 mins</text>
<path d="M610 614.5H1362.5" stroke="#cdd3cd" stroke-width="1"/>
<text x="607" y="619" text-anchor="end" font-size="11" fill="#333">16 mins</text>
<path d="M610 665.5H1362.5" stroke="#cdd3cd" stroke-width="1"/>
<text x="607" y="670" text-anchor="end" font-size="11" fill="#333">12 mins</text>
<path d="M610 716.5H1362.5" stroke="#cdd3cd" stroke-width="1"/>
<text x="607" y="721" text-anchor="end" font-size="11" fill="#333">8 mins</text>
<path d="M610 768.5H1362.5" stroke="#cdd3cd" stroke-width="1"/>
<text x="607" y="773" text-anchor="end" font-size="11" fill="#333">4 mins</text>
<path d="M610 819.5H1362.5" stroke="#cdd3cd" stroke-width="1"/>
<text x="607" y="824" text-anchor="end" font-size="11" fill="#333">0 mins</text>
<path d="M614.5 460V819.5" stroke="#cdd3cd"/>
<path d="M614.5 819.5v4" stroke="#cdd3cd"/>
<path d="M763.5 819.5v4" stroke="#cdd3cd"/>
<path d="M913.5 819.5v4" stroke="#cdd3cd"/>
<path d="M1062.5 819.5v4" stroke="#cdd3cd"/>
<path d="M1212.5 819.5v4" stroke="#cdd3cd"/>
<path d="M1362.5 819.5v4" stroke="#cdd3cd"/>
<text x="688.5" y="836" text-anchor="middle" font-size="11" fill="#333">2</text>
<text x="838.5" y="836" text-anchor="middle" font-size="11" fill="#333">4</text>
<text x="988.5" y="836" text-anchor="middle" font-size="11" fill="#333">8</text>
<text x="1138" y="836" text-anchor="middle" font-size="11" fill="#333">16</text>
<text x="1287.5" y="836" text-anchor="middle" font-size="11" fill="#333">32</text>
<text x="952.5" y="431" text-anchor="middle" font-size="14" font-weight="700" fill="#111">Resource Prediction</text>
<text x="952" y="447" text-anchor="middle" font-size="12" fill="#222">Static Structural (F3)</text>
<text x="987.5" y="855" text-anchor="middle" font-size="11" fill="#444">Number of Cores</text>
<text transform="translate(558,641) rotate(-90)" text-anchor="middle" font-size="11" fill="#444">Elapsed Time (per Load Step)</text>
<rect x="651" y="582" width="34" height="166.5" fill="#ff0000"/>
<rect x="801" y="686" width="34" height="94" fill="#ff0000"/>
<rect x="951" y="738" width="34" height="58" fill="#ff0000"/>
<rect x="1100" y="765" width="34" height="38.5" fill="#ff0000"/>
<rect x="1250" y="778" width="34" height="29.5" fill="#ff0000"/>
<rect x="692" y="506.5" width="34" height="220" fill="#0000ff"/>
<rect x="842" y="629" width="34" height="134" fill="#0000ff"/>
<rect x="992" y="690.5" width="34" height="90.5" fill="#0000ff"/>
<rect x="1141" y="723.5" width="34" height="67.5" fill="#0000ff"/>
<rect x="1291" y="742" width="34" height="55" fill="#0000ff"/>
<polyline points="689,664.2 839,725.3 989,756.4 1138.5,772.1 1288,781" fill="none" stroke="#0000ff" stroke-width="3" stroke-dasharray="3.7 4.3"/>
<rect x="686" y="661.2" width="6" height="6" fill="#0000ff"/>
<rect x="836" y="722.3" width="6" height="6" fill="#0000ff"/>
<rect x="986" y="753.4" width="6" height="6" fill="#0000ff"/>
<rect x="1135.5" y="769.1" width="6" height="6" fill="#0000ff"/>
<rect x="1285" y="778" width="6" height="6" fill="#0000ff"/>
<polyline points="689,700.9 839,753.3 989,779.3 1138.5,793.3 1288,800.2" fill="none" stroke="#ff0000" stroke-width="3" stroke-dasharray="3.7 4.3"/>
<rect x="686" y="697.9" width="6" height="6" fill="#ff0000"/>
<rect x="836" y="750.3" width="6" height="6" fill="#ff0000"/>
<rect x="986" y="776.3" width="6" height="6" fill="#ff0000"/>
<rect x="1135.5" y="790.3" width="6" height="6" fill="#ff0000"/>
<rect x="1285" y="797.2" width="6" height="6" fill="#ff0000"/>
<rect x="708" y="877" width="11" height="11" fill="#ff0000"/>
<text x="724" y="887" font-size="11" fill="#333">Direct Time Range</text>
<rect x="841" y="877" width="11" height="11" fill="#0000ff"/>
<text x="857" y="887" font-size="11" fill="#333">Iterative Time Range</text>
<rect x="988" y="877" width="11" height="11" fill="#ff0000"/>
<text x="1004" y="887" font-size="11" fill="#333">Direct (Time)</text>
<rect x="1092" y="877" width="11" height="11" fill="#0000ff"/>
<text x="1108" y="887" font-size="11" fill="#333">Iterative (Time)</text>
</svg>
<div class="a" style="left:410px;top:919px;width:1088px;height:1px;background:#d0d0d0"></div>
<div class="a" style="left:410px;top:920px;width:1088px;height:1px;background:#8c8c8c"></div>
<div class="a" style="left:440px;top:920px;width:6px;height:1px;background:#333"></div>
<div class="a" style="left:528px;top:920px;width:19px;height:1px;background:#333"></div>
<div class="a" style="left:616px;top:920px;width:19px;height:1px;background:#333"></div>
<div class="a" style="left:704px;top:920px;width:26px;height:1px;background:#333"></div>
<div class="a" style="left:792px;top:920px;width:15px;height:1px;background:#333"></div>
<div class="a" style="left:878px;top:920px;width:24px;height:1px;background:#333"></div>
<div class="a" style="left:964px;top:920px;width:15px;height:1px;background:#333"></div>
<div class="a" style="left:1052px;top:920px;width:26px;height:1px;background:#333"></div>
<div class="a" style="left:1133px;top:920px;width:4px;height:1px;background:#333"></div>
</body></html>
